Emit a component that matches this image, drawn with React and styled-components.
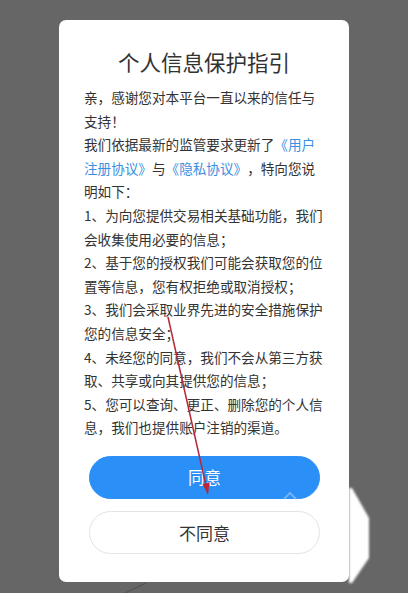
import React from "react";
import styled, { createGlobalStyle } from "styled-components";

const Global = createGlobalStyle`
  html, body { margin: 0; padding: 0; background: #666666; }
  body { font-family: "Noto Sans CJK SC", "Noto Sans", sans-serif; }
`;

const Page = styled.div`
  position: relative;
  width: 408px;
  height: 593px;
  box-sizing: border-box;
  padding: 20px 0 0 59px;
  background: #666666;
  overflow: hidden;
`;

const Dialog = styled.div`
  width: 290px;
  height: 562px;
  box-sizing: border-box;
  background: #ffffff;
  border-radius: 7px;
  padding: 27px 0 0 25px;
  display: flex;
  flex-direction: column;
`;

const Title = styled.h1`
  margin: 0 25px 0 0;
  font-size: 21.5px;
  line-height: 30px;
  font-weight: 400;
  color: #333333;
  text-align: center;
`;

const Body = styled.div`
  margin-top: 9px;
  width: 242px;
  font-size: 13.6px;
  line-height: 23.6px;
  color: #333333;
  text-spacing-trim: space-all;
`;

const Para = styled.p`
  margin: 0;
`;

const Link = styled.span`
  color: #3c8fe0;
`;

const Actions = styled.div`
  margin: 16px 0 0 5px;
  width: 231px;
  display: flex;
  flex-direction: column;
  gap: 12px;
`;

const Button = styled.button`
  height: 43px;
  border-radius: 22px;
  box-sizing: border-box;
  font-family: inherit;
  font-size: ${(p) => (p.$primary ? "16.5px" : "17px")};
  padding: 0;
  cursor: pointer;
  border: 1px solid ${(p) => (p.$primary ? "#2a8ff7" : "#e3e3e3")};
  background: ${(p) => (p.$primary ? "#2a8ff7" : "#ffffff")};
  color: ${(p) => (p.$primary ? "#ffffff" : "#333333")};
`;

const Overlay = styled.svg`
  position: absolute;
  left: 0;
  top: 0;
  pointer-events: none;
`;

export default function App() {
  return (
    <>
      <Global />
      <Page>
        <Dialog>
          <Title>个人信息保护指引</Title>
          <Body>
            <Para>亲，感谢您对本平台一直以来的信任与支持！</Para>
            <Para>
              我们依据最新的监管要求更新了<Link>《用户注册协议》</Link>与<Link>《隐私协议》</Link>，特向您说明如下：
            </Para>
            <Para>1、为向您提供交易相关基础功能，我们会收集使用必要的信息；</Para>
            <Para>2、基于您的授权我们可能会获取您的位置等信息，您有权拒绝或取消授权；</Para>
            <Para>3、我们会采取业界先进的安全措施保护您的信息安全；</Para>
            <Para>4、未经您的同意，我们不会从第三方获取、共享或向其提供您的信息；</Para>
            <Para>5、您可以查询、更正、删除您的个人信息，我们也提供账户注销的渠道。</Para>
          </Body>
          <Actions>
            <Button $primary>同意</Button>
            <Button>不同意</Button>
          </Actions>
        </Dialog>
        <Overlay width="408" height="593" viewBox="0 0 408 593">
          <defs>
            <filter id="blur" x="-50%" y="-50%" width="200%" height="200%">
              <feGaussianBlur stdDeviation="1.2" />
            </filter>
          </defs>
          <polygon
            points="349,488 352,488 369,518 369,558 352,583 349,583"
            fill="#ffffff"
            filter="url(#blur)"
          />
          <path d="M284 499 L290 493 L296 499" fill="none" stroke="#8fc2f5" strokeWidth="2" opacity="0.7" />
          <line x1="125" y1="593" x2="146" y2="583" stroke="#4f4f4f" strokeWidth="1" />
          <line x1="168" y1="317" x2="206.5" y2="488" stroke="#b8283a" strokeWidth="1.5" />
          <polygon points="208,495 202.5,484 209.5,482.5" fill="#b8283a" />
        </Overlay>
      </Page>
    </>
  );
}
